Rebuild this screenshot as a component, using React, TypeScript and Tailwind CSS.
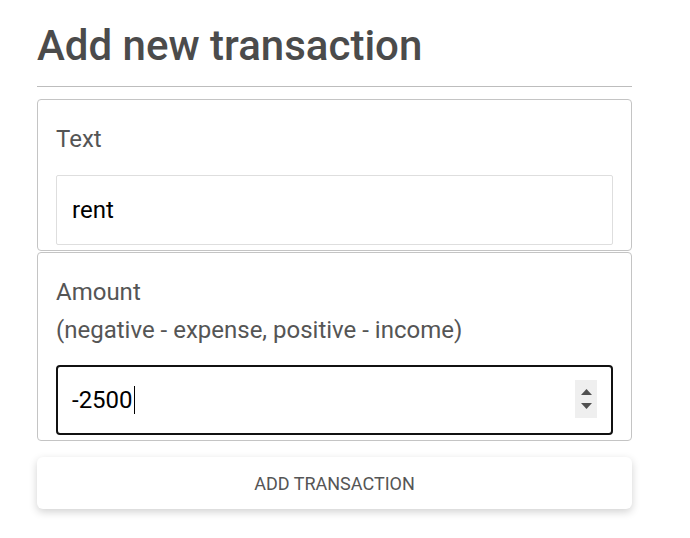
import React from 'react';

function FieldBox({ children }: { children: React.ReactNode }) {
  return (
    <div className="rounded-[4px] border border-[#c4c4c4] px-[18px] pb-[5px] pt-[20px]">{children}</div>
  );
}

export default function App() {
  return (
    <div className="min-h-screen bg-white font-['Roboto',sans-serif]">
      <div className="ml-[37px] w-[595px] pt-[22px]">
        <h3 className="text-[42px] font-medium leading-[48px] text-[#4b4b4b]">Add new transaction</h3>
        <hr className="mt-[16px] mb-[12px] border-t border-[#bdbdbd]" />

        <FieldBox>
          <label className="block text-[24px] leading-[38px] text-[#555]">Text</label>
          <input
            type="text"
            readOnly
            value="rent"
            className="mt-[17px] block h-[70px] w-full rounded-[2px] border border-[#dedede] px-[15px] text-[24px] text-black outline-none"
          />
        </FieldBox>

        <div className="mt-[1px]">
          <FieldBox>
            <label className="block text-[24px] leading-[38px] text-[#555]">
              Amount
              <br />
              (negative - expense, positive - income)
            </label>
            <div className="relative mt-[16px] flex h-[70px] items-center rounded-[4px] border-2 border-[#111] px-[14px] text-[24px] text-black">
              <span>-2500</span>
              <span className="ml-[1px] inline-block h-[28px] w-px bg-black" />
              <div className="absolute right-[14px] top-[13px] flex h-[38px] w-[22px] flex-col items-center justify-center gap-[8px] bg-[#efefef]">
                <svg width="11" height="6" viewBox="0 0 11 6">
                  <path d="M0 6 L5.5 0 L11 6 Z" fill="#505050" />
                </svg>
                <svg width="11" height="6" viewBox="0 0 11 6">
                  <path d="M0 0 L5.5 6 L11 0 Z" fill="#505050" />
                </svg>
              </div>
            </div>
          </FieldBox>
        </div>

        <button
          type="button"
          className="mt-[16px] block h-[52px] w-full rounded-[6px] bg-white text-[18px] font-normal uppercase text-[#555] shadow-[0_3px_8px_rgba(0,0,0,0.18)]"
        >
          Add transaction
        </button>
      </div>
    </div>
  );
}
